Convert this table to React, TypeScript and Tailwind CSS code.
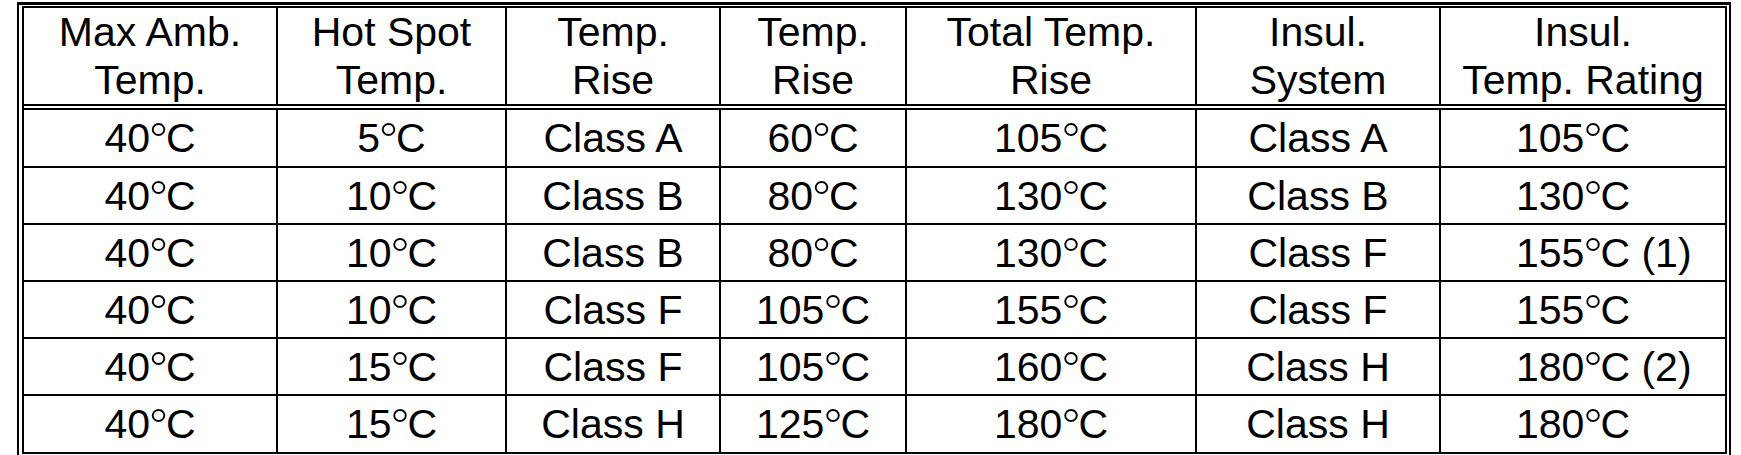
import React from "react";

const headers: [string, string][] = [
  ["Max Amb.", "Temp."],
  ["Hot Spot", "Temp."],
  ["Temp.", "Rise"],
  ["Temp.", "Rise"],
  ["Total Temp.", "Rise"],
  ["Insul.", "System"],
  ["Insul.", "Temp. Rating"],
];

const rows: string[][] = [
  ["40°C", "5°C", "Class A", "60°C", "105°C", "Class A", "105°C"],
  ["40°C", "10°C", "Class B", "80°C", "130°C", "Class B", "130°C"],
  ["40°C", "10°C", "Class B", "80°C", "130°C", "Class F", "155°C (1)"],
  ["40°C", "10°C", "Class F", "105°C", "155°C", "Class F", "155°C"],
  ["40°C", "15°C", "Class F", "105°C", "160°C", "Class H", "180°C (2)"],
  ["40°C", "15°C", "Class H", "125°C", "180°C", "Class H", "180°C"],
];

const rowHeights = ["h-[58px] border-b-2", "h-[57px] border-b-2", "h-[57px] border-b-2", "h-[57px] border-b-2", "h-[57px] border-b-2", "h-[56px]"];

function Val({ text }: { text: string }) {
  const idx = text.indexOf("°");
  if (idx < 0) return <>{text}</>;
  return (
    <>
      {text.slice(0, idx)}
      <span className="font-['DejaVu_Sans',sans-serif] font-extralight text-[50px] leading-[0] align-[-7px] ml-[-4px] mr-[-5px]">°</span>
      {text.slice(idx + 1)}
    </>
  );
}

export default function App() {
  return (
    <div className="w-[1741px] h-[455px] overflow-hidden bg-white text-black font-['Liberation_Sans',Arial,sans-serif]">
      <div className="ml-[17px] mt-[2px] w-[1714px] border-l-2 border-r-2 border-t-[3px] border-b-2 border-black pl-[3px] pr-[2px] pt-[1px] pb-[2px]">
        <div className="border-2 border-black">
          {/* Header */}
          <div className="grid grid-cols-[252px_229px_214px_186px_290px_244px_286px] h-[98px] border-b-2 border-black">
            {headers.map((h, i) => (
              <div
                key={i}
                className={`flex flex-col items-center text-[41px] leading-[48px] ${i > 0 ? "border-l-2 border-black" : ""}`}
              >
                <span className="whitespace-nowrap">{h[0]}</span>
                <span className="whitespace-nowrap">{h[1]}</span>
              </div>
            ))}
          </div>
          <div className="h-[2px]" />
          <div className="border-t-2 border-black">
            {rows.map((r, ri) => (
              <div
                key={ri}
                className={`grid grid-cols-[252px_229px_214px_186px_290px_244px_286px] border-black ${rowHeights[ri]}`}
              >
                {r.map((c, ci) => (
                  <div
                    key={ci}
                    className={`flex items-center text-[41px] leading-[46px] whitespace-nowrap ${ci > 0 ? "border-l-2 border-black" : ""} ${ci === 6 ? "justify-start pl-[75px]" : "justify-center"}`}
                  >
                    <span>
                      <Val text={c} />
                    </span>
                  </div>
                ))}
              </div>
            ))}
          </div>
        </div>
      </div>
    </div>
  );
}
